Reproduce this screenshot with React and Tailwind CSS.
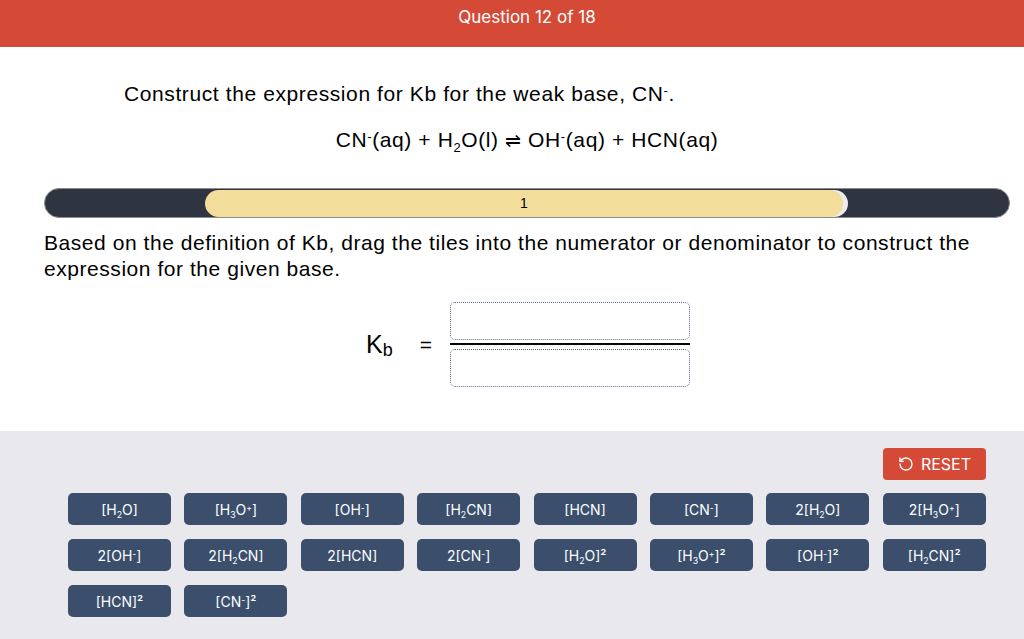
import React from 'react';
import { RotateCcw } from 'lucide-react';

const Sub = ({ children }) => (
  <span className="relative top-[0.42em] text-[0.62em] leading-[0]">{children}</span>
);

const Sup = ({ children }) => (
  <span className="relative -top-[0.45em] text-[0.62em] leading-[0]">{children}</span>
);

const tiles = [
  <>[H<Sub>2</Sub>O]</>,
  <>[H<Sub>3</Sub>O<Sup>+</Sup>]</>,
  <>[OH<Sup>-</Sup>]</>,
  <>[H<Sub>2</Sub>CN]</>,
  <>[HCN]</>,
  <>[CN<Sup>-</Sup>]</>,
  <>2[H<Sub>2</Sub>O]</>,
  <>2[H<Sub>3</Sub>O<Sup>+</Sup>]</>,
  <>2[OH<Sup>-</Sup>]</>,
  <>2[H<Sub>2</Sub>CN]</>,
  <>2[HCN]</>,
  <>2[CN<Sup>-</Sup>]</>,
  <>[H<Sub>2</Sub>O]²</>,
  <>[H<Sub>3</Sub>O<Sup>+</Sup>]²</>,
  <>[OH<Sup>-</Sup>]²</>,
  <>[H<Sub>2</Sub>CN]²</>,
  <>[HCN]²</>,
  <>[CN<Sup>-</Sup>]²</>
];

const App = () => {
  return (
    <div className="w-[1024px] h-[639px] flex flex-col bg-white font-['Liberation_Sans',Arial,sans-serif] text-black overflow-hidden">
      <header className="h-[47px] shrink-0 bg-[#d54a37] flex justify-center pt-[6px] text-white text-[17px] font-['Inter',sans-serif]">
        <span className="leading-[22px] ml-[30px]">Question 12 of 18</span>
      </header>

      <main className="flex-1 flex flex-col">
        <p className="mt-[35px] pl-[124px] text-[21px] tracking-[0.6px] leading-[24px]">
          Construct the expression for Kb for the weak base, CN<Sup>-</Sup>.
        </p>
        <div className="mt-[22px] ml-[124px] mr-[94px] flex justify-center text-[21px] tracking-[0.6px] leading-[24px]">
          <span>
            CN<Sup>-</Sup>(aq) + H<Sub>2</Sub>O(l) <span className="text-[19px] leading-[0]">⇌</span> OH<Sup>-</Sup>(aq) + HCN(aq)
          </span>
        </div>

        <div className="mt-[36px] ml-[44px] mr-[14px] h-[30px] rounded-full bg-[#2f3441] border border-[#8c8c8c] flex items-center pl-[160px]">
          <div className="h-[27px] w-[638px] rounded-full bg-[#f3dd9b] shadow-[5px_0_0_0_#ececec] flex items-center justify-center text-[14px]">
            1
          </div>
        </div>

        <p className="mt-[12px] ml-[44px] mr-[14px] text-[21px] tracking-[0.55px] leading-[26px]">
          Based on the definition of Kb, drag the tiles into the numerator or denominator to construct the expression for the given base.
        </p>

        <div className="mt-[20px] flex items-center pl-[366px]">
          <span className="text-[25px] leading-none">
            K<span className="relative top-[0.15em] text-[18px]">b</span>
          </span>
          <span className="ml-[27px] text-[21px]">=</span>
          <div className="ml-[18px] w-[240px] flex flex-col">
            <div className="h-[38px] rounded-[5px] border border-dotted border-[#58698a]"></div>
            <div className="mt-[3px] h-[2px] bg-black"></div>
            <div className="mt-[4px] h-[38px] rounded-[5px] border border-dotted border-[#58698a]"></div>
          </div>
        </div>
      </main>

      <section className="h-[208px] shrink-0 bg-[#e9e8ed] flex flex-col pl-[68px] pr-[38px] pt-[17px]">
        <div className="flex justify-end">
          <button className="h-[32px] w-[103px] rounded-[4px] bg-[#d54a37] text-white flex items-center justify-center gap-[7px] text-[16px] font-['Inter',sans-serif]">
            <RotateCcw size={16} strokeWidth={2} />
            RESET
          </button>
        </div>
        <div className="mt-[13px] grid grid-cols-[repeat(8,103px)] gap-x-[13.4px] gap-y-[14px]">
          {tiles.map((t, i) => (
            <div
              key={i}
              className="h-[32px] rounded-[5px] bg-[#3b4f6d] text-white flex items-center justify-center text-[14px] font-['Inter',sans-serif]"
            >
              <span>{t}</span>
            </div>
          ))}
        </div>
      </section>
    </div>
  );
};

export default App;
